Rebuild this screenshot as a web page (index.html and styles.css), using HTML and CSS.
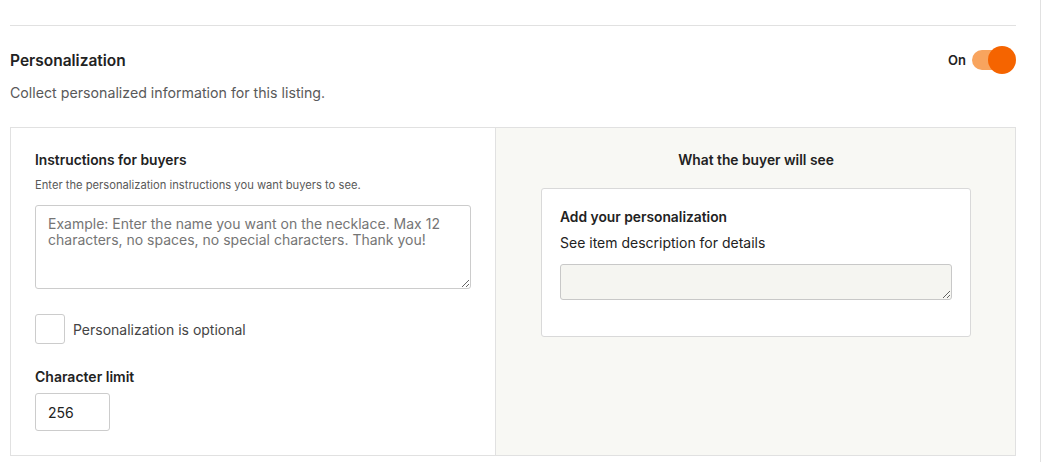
FILE: index.html
```html
<!DOCTYPE html>
<html>

<head>
    <meta charset="utf-8">
    <title>Personalization</title>
    <link rel="stylesheet" href="styles.css">
</head>

<body>
    <div class="page">
        <div class="section">
            <div class="section-head">
                <div class="head-text">
                    <h2 class="title">Personalization</h2>
                    <p class="desc">Collect personalized information for this listing.</p>
                </div>
                <label class="toggle">
                    <span class="toggle-label">On</span>
                    <span class="switch"><span class="knob"></span></span>
                </label>
            </div>

            <div class="panel">
                <div class="panel-left">
                    <div class="field-title">Instructions for buyers</div>
                    <div class="field-help">Enter the personalization instructions you want buyers to see.</div>
                    <textarea class="instructions" placeholder="Example: Enter the name you want on the necklace. Max 12 characters, no spaces, no special characters. Thank you!"></textarea>

                    <label class="check-row">
                        <span class="checkbox"></span>
                        <span class="check-label">Personalization is optional</span>
                    </label>

                    <div class="limit-title">Character limit</div>
                    <input class="limit" type="text" value="256">
                </div>

                <div class="panel-right">
                    <div class="preview-title">What the buyer will see</div>
                    <div class="preview-card">
                        <div class="preview-head">Add your personalization</div>
                        <div class="preview-sub">See item description for details</div>
                        <textarea class="preview-input"></textarea>
                    </div>
                </div>
            </div>
        </div>
    </div>
</body>

</html>
```

FILE: styles.css
```css
html,
body {
    margin: 0;
    padding: 0;
    height: 100%;
    overflow: hidden;
}

body {
    font-family: Inter, "Noto Sans", Arial, sans-serif;
    color: #222;
    background: #fff;
}

.page {
    box-sizing: border-box;
    width: 1041px;
    height: 100%;
    border-right: 1px solid #e1e1e1;
    padding: 25px 24px 0 10px;
}

.section {
    border-top: 1px solid #e1e1e1;
}

.section-head {
    display: flex;
    justify-content: space-between;
    align-items: flex-start;
    padding-top: 24px;
}

.title {
    margin: 0;
    font-size: 15.5px;
    font-weight: 600;
    line-height: 22px;
    color: #222;
}

.desc {
    margin: 11px 0 0;
    font-size: 14.2px;
    line-height: 20px;
    color: #595959;
}

.toggle {
    display: flex;
    align-items: center;
    gap: 6px;
    margin-top: -4px;
}

.toggle-label {
    font-size: 13px;
    font-weight: 600;
    color: #222;
}

.switch {
    position: relative;
    display: block;
    width: 44px;
    height: 28px;
}

.switch::before {
    content: '';
    position: absolute;
    left: 0;
    top: 4px;
    width: 38px;
    height: 20px;
    border-radius: 10px;
    background: #f8a45e;
}

.knob {
    position: absolute;
    right: 0;
    top: 0;
    width: 28px;
    height: 28px;
    border-radius: 50%;
    background: #f56400;
}

.panel {
    display: flex;
    margin-top: 24px;
    border: 1px solid #e1e1e1;
    height: 329px;
    box-sizing: border-box;
}

.panel-left {
    width: 485px;
    box-sizing: border-box;
    padding: 23px 24px 0 24px;
    border-right: 1px solid #e1e1e1;
}

.field-title,
.preview-title,
.preview-head {
    font-size: 13.8px;
    font-weight: 600;
    line-height: 18px;
    color: #222;
}

.field-help {
    margin-top: 9px;
    font-size: 11.2px;
    line-height: 15px;
    color: #595959;
}

.instructions {
    display: block;
    box-sizing: border-box;
    width: 436px;
    height: 84px;
    margin-top: 12px;
    padding: 10px 12px;
    border: 1px solid #ccc;
    border-radius: 3px;
    font-family: inherit;
    font-size: 14px;
    line-height: 16px;
    resize: vertical;
}

.instructions::placeholder {
    color: #757575;
}

.check-row {
    display: flex;
    align-items: center;
    gap: 8px;
    margin-top: 25px;
}

.checkbox {
    box-sizing: border-box;
    width: 30px;
    height: 30px;
    border: 1px solid #ccc;
    border-radius: 3px;
    background: #fff;
}

.check-label {
    font-size: 14px;
    color: #444;
}

.limit-title {
    margin-top: 24px;
    font-size: 14px;
    font-weight: 600;
    line-height: 18px;
}

.limit {
    display: block;
    box-sizing: border-box;
    width: 75px;
    height: 38px;
    margin-top: 7px;
    padding: 0 12px;
    border: 1px solid #ccc;
    border-radius: 3px;
    font-family: inherit;
    font-size: 14px;
    color: #222;
}

.panel-right {
    flex: 1;
    background: #f8f8f4;
    padding: 23px 44px 0 45px;
}

.preview-title {
    text-align: center;
}

.preview-card {
    margin-top: 19px;
    height: 149px;
    box-sizing: border-box;
    padding: 19px 18px 0 18px;
    background: #fff;
    border: 1px solid #d9d9d9;
    border-radius: 3px;
}

.preview-sub {
    margin-top: 8px;
    font-size: 14px;
    line-height: 18px;
    color: #222;
}

.preview-input {
    display: block;
    box-sizing: border-box;
    width: 100%;
    height: 36px;
    margin-top: 12px;
    border: 1px solid #c8c8c8;
    border-radius: 3px;
    background: #f5f5f1;
    resize: vertical;
}
```
